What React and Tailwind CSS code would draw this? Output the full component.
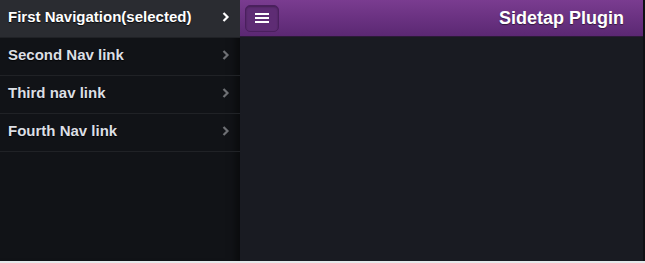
const links = [
  { label: "First Navigation(selected)", selected: true },
  { label: "Second Nav link" },
  { label: "Third nav link" },
  { label: "Fourth Nav link" },
];

function Chevron({ color }) {
  return (
    <svg width="8" height="10" viewBox="0 0 8 10" className="shrink-0">
      <path d="M1.5 1 L5.5 5 L1.5 9" fill="none" stroke={color} strokeWidth="2.2" />
    </svg>
  );
}

export default function App() {
  return (
    <div className="h-[263px] w-[645px] bg-[#e6e8ea] font-['Liberation_Sans',Arial,sans-serif]">
      <div className="flex h-[261px] w-[645px]">
        {/* side nav */}
        <nav className="w-[240px] shrink-0 bg-[#111317] shadow-[inset_-12px_0_10px_-8px_rgba(0,0,0,0.5)]">
          {links.map((link) => (
            <div
              key={link.label}
              className={`flex h-[38px] items-center justify-between border-b border-[#202226] pb-[3px] pl-2 pr-[10px] text-[15px] font-bold [text-shadow:0_1px_1px_rgba(0,0,0,0.8)] ${
                link.selected ? "h-[37px] bg-[#2a2c31] text-white" : "text-[#dcdfe4]"
              }`}
            >
              <span>{link.label}</span>
              <Chevron color={link.selected ? "#ffffff" : "#6e7074"} />
            </div>
          ))}
        </nav>

        {/* main */}
        <div className="flex flex-1 flex-col border-r-2 border-[#0f1014] bg-[#191b22]">
          <header className="flex h-[37px] items-center justify-between border-b border-[#2c1a38] bg-gradient-to-b from-[#7a3c90] to-[#5b2873] pl-[5px] pr-[19px]">
            <button className="flex h-[27px] w-[34px] items-center justify-center rounded-[5px] border border-[#4a1f5e] bg-[#5e2c74] shadow-[inset_0_1px_2px_rgba(0,0,0,0.3)]">
              <svg width="14" height="12" viewBox="0 0 14 12">
                <rect x="0" y="1" width="14" height="2" fill="#fff" />
                <rect x="0" y="5" width="14" height="2" fill="#fff" />
                <rect x="0" y="9" width="14" height="2" fill="#fff" />
              </svg>
            </button>
            <h1 className="text-[18px] font-bold text-white [text-shadow:0_1px_1px_rgba(0,0,0,0.5)]">Sidetap Plugin</h1>
          </header>
          <div className="flex-1" />
        </div>
      </div>
    </div>
  );
}
